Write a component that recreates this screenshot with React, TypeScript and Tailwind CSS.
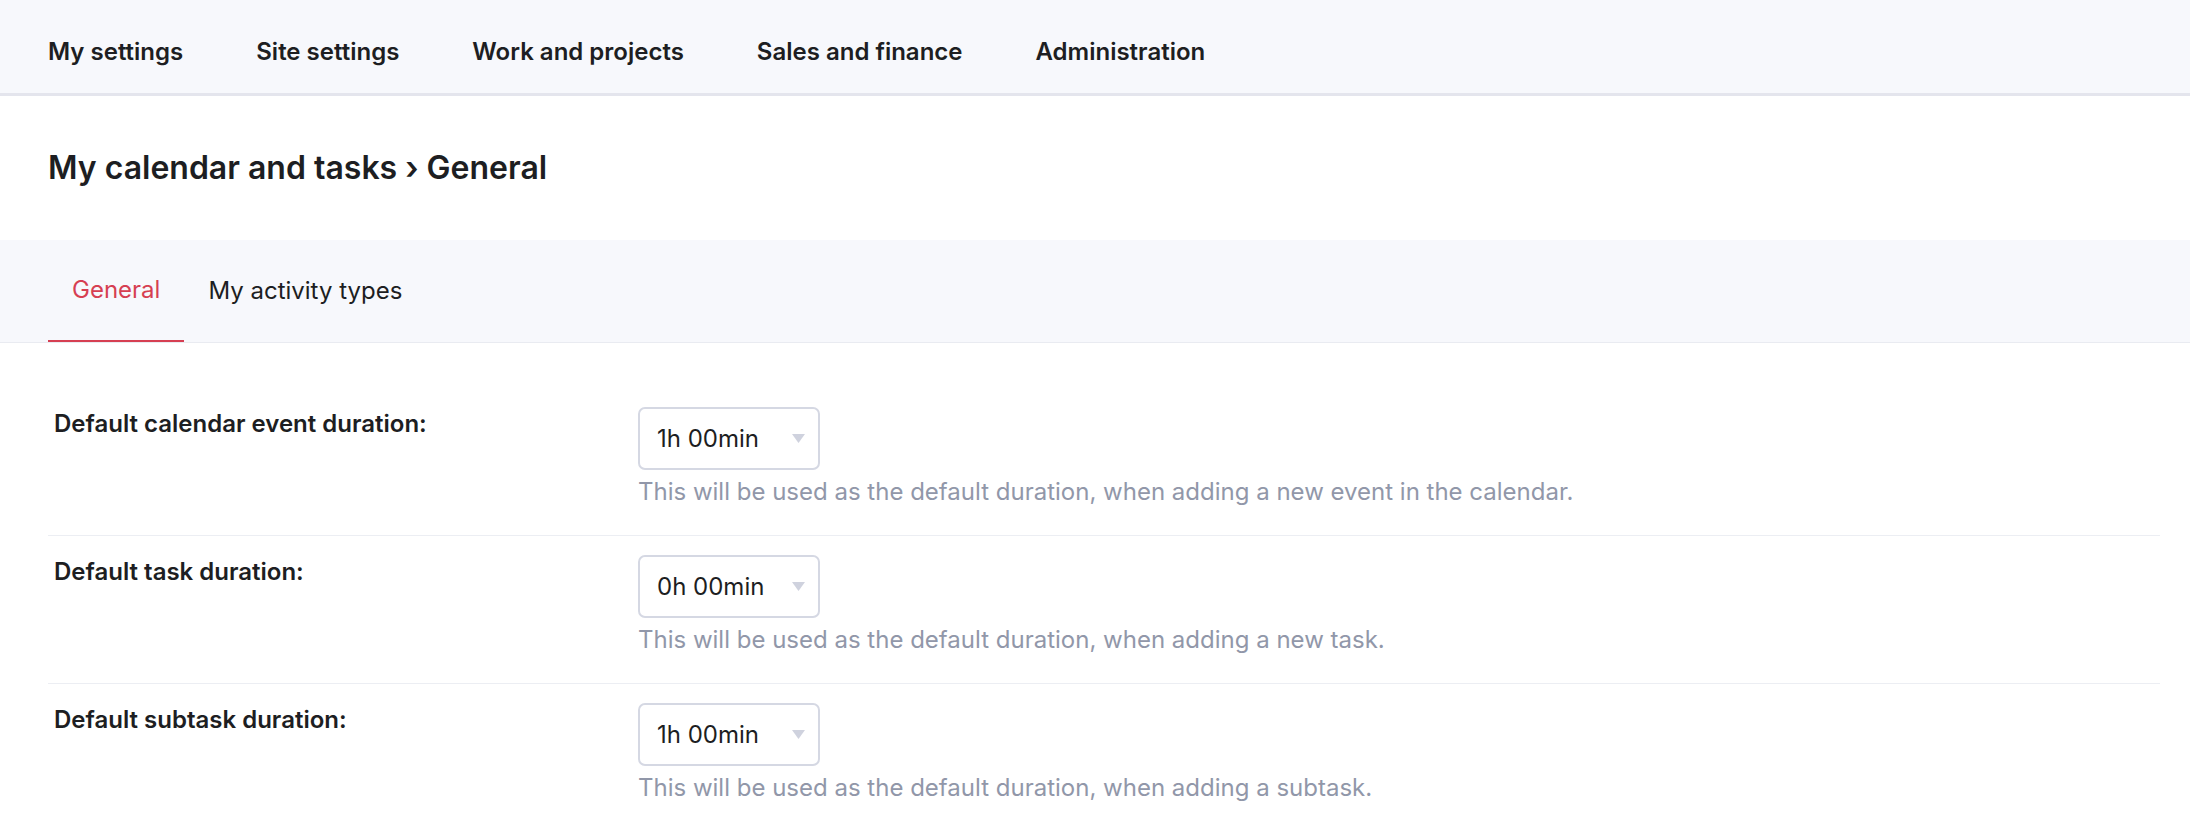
import React from 'react';

const navItems = ['My settings', 'Site settings', 'Work and projects', 'Sales and finance', 'Administration'];

const rows = [
  { label: 'Default calendar event duration:', value: '1h 00min', help: 'This will be used as the default duration, when adding a new event in the calendar.' },
  { label: 'Default task duration:', value: '0h 00min', help: 'This will be used as the default duration, when adding a new task.' },
  { label: 'Default subtask duration:', value: '1h 00min', help: 'This will be used as the default duration, when adding a subtask.' },
];

function DurationSelect({ value }: { value: string }) {
  return (
    <div className="w-[182px] h-[63px] border-2 border-[#d5d8e3] rounded-[7px] flex items-center justify-between pl-[17px] pr-[13px] bg-white">
      <span className="text-[24px] text-[#1d1e22]">{value}</span>
      <svg width="13" height="9" viewBox="0 0 13 9">
        <path d="M0 0 L13 0 L6.5 9 Z" fill="#cfd2de" />
      </svg>
    </div>
  );
}

export default function App() {
  return (
    <div className="min-h-screen bg-white text-[#1d1e22]" style={{ fontFamily: 'Inter, "Noto Sans", sans-serif' }}>
      <div className="h-[96px] bg-[#f7f8fc] border-b-[3px] border-[#e4e5ed] flex items-center px-12 pt-[11px] gap-[73px]">
        {navItems.map((n) => (
          <span key={n} className="text-[24px] font-semibold">{n}</span>
        ))}
      </div>

      <div className="h-[144px] flex items-center px-12">
        <h1 className="text-[32px] font-semibold">My calendar and tasks › General</h1>
      </div>

      <div className="h-[103px] bg-[#f7f8fc] border-b border-[#e9ebf1] flex px-12">
        <div className="px-6 flex items-center border-b-2 border-[#d63f52] text-[24px] text-[#d63f52]">General</div>
        <div className="px-6 flex items-center text-[24px]">My activity types</div>
      </div>

      <div className="pl-12 pr-[30px] pt-[45px]">
        {rows.map((r, i) => (
          <div key={r.label} className={`flex items-start pt-[19px] pb-[28px] ${i < rows.length - 1 ? 'border-b border-[#eceef3]' : ''}`}>
            <div className="w-[590px] pl-[6px] mt-[2px] leading-[30px] text-[24px] font-semibold">{r.label}</div>
            <div>
              <DurationSelect value={r.value} />
              <p className="mt-[7px] leading-[30px] text-[24px] text-[#9197a9]">{r.help}</p>
            </div>
          </div>
        ))}
      </div>
    </div>
  );
}
